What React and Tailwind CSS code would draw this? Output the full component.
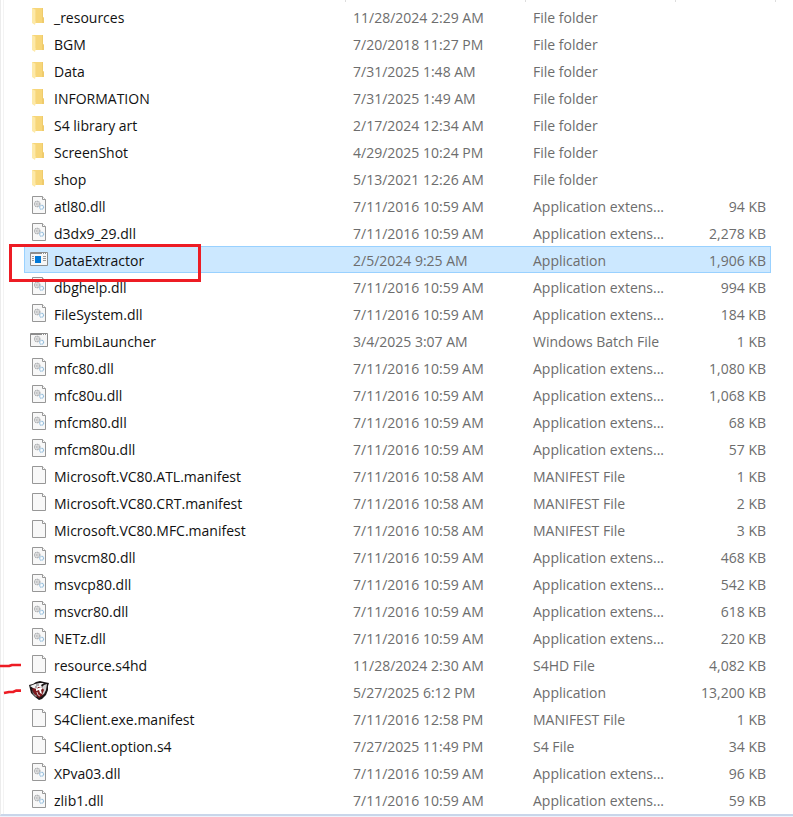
import clsx from 'clsx';

const files = [
  { name: '_resources', date: '11/28/2024 2:29 AM', type: 'File folder', size: '', icon: 'folder' },
  { name: 'BGM', date: '7/20/2018 11:27 PM', type: 'File folder', size: '', icon: 'folder' },
  { name: 'Data', date: '7/31/2025 1:48 AM', type: 'File folder', size: '', icon: 'folder' },
  { name: 'INFORMATION', date: '7/31/2025 1:49 AM', type: 'File folder', size: '', icon: 'folder' },
  { name: 'S4 library art', date: '2/17/2024 12:34 AM', type: 'File folder', size: '', icon: 'folder' },
  { name: 'ScreenShot', date: '4/29/2025 10:24 PM', type: 'File folder', size: '', icon: 'folder' },
  { name: 'shop', date: '5/13/2021 12:26 AM', type: 'File folder', size: '', icon: 'folder' },
  { name: 'atl80.dll', date: '7/11/2016 10:59 AM', type: 'Application extens...', size: '94 KB', icon: 'dll' },
  { name: 'd3dx9_29.dll', date: '7/11/2016 10:59 AM', type: 'Application extens...', size: '2,278 KB', icon: 'dll' },
  { name: 'DataExtractor', date: '2/5/2024 9:25 AM', type: 'Application', size: '1,906 KB', icon: 'app', selected: true, mark: 'box' },
  { name: 'dbghelp.dll', date: '7/11/2016 10:59 AM', type: 'Application extens...', size: '994 KB', icon: 'dll' },
  { name: 'FileSystem.dll', date: '7/11/2016 10:59 AM', type: 'Application extens...', size: '184 KB', icon: 'dll' },
  { name: 'FumbiLauncher', date: '3/4/2025 3:07 AM', type: 'Windows Batch File', size: '1 KB', icon: 'batch' },
  { name: 'mfc80.dll', date: '7/11/2016 10:59 AM', type: 'Application extens...', size: '1,080 KB', icon: 'dll' },
  { name: 'mfc80u.dll', date: '7/11/2016 10:59 AM', type: 'Application extens...', size: '1,068 KB', icon: 'dll' },
  { name: 'mfcm80.dll', date: '7/11/2016 10:59 AM', type: 'Application extens...', size: '68 KB', icon: 'dll' },
  { name: 'mfcm80u.dll', date: '7/11/2016 10:59 AM', type: 'Application extens...', size: '57 KB', icon: 'dll' },
  { name: 'Microsoft.VC80.ATL.manifest', date: '7/11/2016 10:58 AM', type: 'MANIFEST File', size: '1 KB', icon: 'file' },
  { name: 'Microsoft.VC80.CRT.manifest', date: '7/11/2016 10:58 AM', type: 'MANIFEST File', size: '2 KB', icon: 'file' },
  { name: 'Microsoft.VC80.MFC.manifest', date: '7/11/2016 10:58 AM', type: 'MANIFEST File', size: '3 KB', icon: 'file' },
  { name: 'msvcm80.dll', date: '7/11/2016 10:59 AM', type: 'Application extens...', size: '468 KB', icon: 'dll' },
  { name: 'msvcp80.dll', date: '7/11/2016 10:59 AM', type: 'Application extens...', size: '542 KB', icon: 'dll' },
  { name: 'msvcr80.dll', date: '7/11/2016 10:59 AM', type: 'Application extens...', size: '618 KB', icon: 'dll' },
  { name: 'NETz.dll', date: '7/11/2016 10:59 AM', type: 'Application extens...', size: '220 KB', icon: 'dll' },
  { name: 'resource.s4hd', date: '11/28/2024 2:30 AM', type: 'S4HD File', size: '4,082 KB', icon: 'file', mark: 'dash' },
  { name: 'S4Client', date: '5/27/2025 6:12 PM', type: 'Application', size: '13,200 KB', icon: 's4', mark: 'slant' },
  { name: 'S4Client.exe.manifest', date: '7/11/2016 12:58 PM', type: 'MANIFEST File', size: '1 KB', icon: 'file' },
  { name: 'S4Client.option.s4', date: '7/27/2025 11:49 PM', type: 'S4 File', size: '34 KB', icon: 'file' },
  { name: 'XPva03.dll', date: '7/11/2016 10:59 AM', type: 'Application extens...', size: '96 KB', icon: 'dll' },
  { name: 'zlib1.dll', date: '7/11/2016 10:59 AM', type: 'Application extens...', size: '59 KB', icon: 'dll' },
];

function Gears() {
  return (
    <>
      <circle cx="8.2" cy="9" r="2.7" fill="#ececec" stroke="#a0a3a6" strokeWidth="1.1" strokeDasharray="1.2 0.5" />
      <circle cx="8.2" cy="9" r="1" fill="#fff" stroke="#a0a3a6" strokeWidth="0.7" />
      <circle cx="12.6" cy="12.2" r="2" fill="#eef6fc" stroke="#93bbd9" strokeWidth="1.1" strokeDasharray="1.1 0.4" />
      <circle cx="12.6" cy="12.2" r="0.7" fill="#fff" />
    </>
  );
}

function Page() {
  return (
    <>
      <path d="M3.5 1.5h10l3 3v14h-13z" fill="#f8f8f8" stroke="#979797" />
      <path d="M13.5 1.5v3h3" fill="#fff" stroke="#979797" />
    </>
  );
}

function WindowFrame() {
  return (
    <>
      <path d="M1.5 3.5h17v13h-17z" fill="#f6f6f6" stroke="#8d8d8d" />
      <path d="M1 4.5h18" stroke="#8d8d8d" />
      <path d="M13 4.5h1M15 4.5h1M17 4.5h1" stroke="#fff" />
    </>
  );
}

function FileIcon({ kind }) {
  return (
    <svg viewBox="0 0 20 21" className="block w-5 h-[21px] shrink-0" aria-hidden="true">
      {kind === 'folder' && (
        <>
          <path d="M3 2h11v9l1 1v5H3z" fill="#f7d679" />
          <path d="M13 2h1v9l1 1v5h-2z" fill="#efcb6c" />
          <path d="M3 2l4 2v11l-1 4-3-2z" fill="#fde9a8" />
          <path d="M6 4h1v11l-1 1z" fill="#f9dd8c" />
        </>
      )}
      {kind === 'file' && <Page />}
      {kind === 'dll' && (
        <>
          <Page />
          <Gears />
        </>
      )}
      {kind === 'batch' && (
        <>
          <WindowFrame />
          <Gears />
        </>
      )}
      {kind === 'app' && (
        <>
          <WindowFrame />
          <path d="M3 7.5h2M3 9.5h2M3 11.5h2M14 7.5h3M14 9.5h3M14 11.5h3" stroke="#9a9a9a" />
          <path d="M6 7h6v7H6z" fill="#0078d7" />
        </>
      )}
      {kind === 's4' && (
        <>
          <path d="M0 4l4-1 3-2 4-1 4 1 5 1-1 3 0 4-2 5-4 4-3 1-4-3-4-4-1-4z" fill="#1a1516" />
          <path d="M3 8l2 5 5 4 4-3 2-6-4-2-6 0z" fill="#7d1a1e" />
          <path d="M1 5l5-2 5-1 4 0-3 2 1 2-4 0-1 2-4-1z" fill="#f2f2f2" />
          <path d="M15 4l3-1-1 6-2 4-2 1 2-5-2-3z" fill="#cfcfcf" />
          <path d="M7 8l5-2 2 1-2 2 1 4-2-1-1-3-3 1z" fill="#fff" />
          <path d="M3 9l2 4 3 2-1 1-3-3z" fill="#9b9b9b" />
          <path d="M8 11l1 3 2 1" fill="none" stroke="#e9e9e9" strokeWidth="0.8" />
          <path d="M7 4h3M6 6h2" stroke="#4a4244" strokeWidth="0.8" />
        </>
      )}
    </svg>
  );
}

// red pen marks drawn over the list
function Mark({ kind }) {
  if (kind === 'box') {
    return (
      <span className="absolute z-10 -left-4 -top-[3px] w-48 h-[38px] border-3 border-[#ed1c24] pointer-events-none" />
    );
  }
  return (
    <svg
      viewBox="0 0 24 27"
      className="absolute z-10 -left-6 top-0 w-6 h-[27px] pointer-events-none"
      fill="none"
      stroke="#ed1c24"
      strokeWidth="2.6"
      strokeLinejoin="round"
      aria-hidden="true"
    >
      {kind === 'dash' ? <path d="M0 14h9l3-1h9" /> : <path d="M4 14l5-1h4l3-1.4h5" />}
    </svg>
  );
}

function FileRow({ file }) {
  const cell = clsx(
    'h-[27px] font-normal whitespace-nowrap border-y',
    file.selected ? 'bg-[#cce8ff] border-[#99d1ff]' : 'border-transparent'
  );

  return (
    <tr aria-selected={!!file.selected}>
      <th scope="row" className={clsx(cell, 'relative text-left text-[#111111]', file.selected && 'border-l')}>
        <div className={clsx('flex items-center gap-[5px]', file.selected ? 'pl-1' : 'pl-[5px]')}>
          <FileIcon kind={file.icon} />
          <span className="pt-0.5">{file.name}</span>
        </div>
        {file.mark && <Mark kind={file.mark} />}
      </th>
      <td className={clsx(cell, 'pt-0.5 pl-2')}>{file.date}</td>
      <td className={clsx(cell, 'pt-0.5 pl-2')}>{file.type}</td>
      <td className={clsx(cell, 'pt-0.5 text-right', file.selected ? 'border-r pr-1' : 'pr-[5px]')}>{file.size}</td>
    </tr>
  );
}

function App() {
  return (
    <main className="min-h-screen bg-[#eef3fb] font-['Open_Sans','Noto_Sans',sans-serif] text-sm leading-5 text-[#6d6d6d]">
      <div className="bg-white border-l border-l-[#ececec] border-b-2 border-b-[#c9d6ea]">
        <div className="ml-[2px] border-l border-[#f3f3f3] pl-5 pr-[17px] pb-px">
          <div className="flex h-[3px] items-start" aria-hidden="true">
            <div className="flex-1" />
            <div className="w-[180px] h-0.5 border-l border-[#dddddd]" />
            <div className="w-[150px] h-0.5 border-l border-[#dddddd]" />
            <div className="w-[101px] h-0.5 border-x border-[#dddddd]" />
          </div>
          <div className="pr-[5px]">
            <table className="w-full table-fixed border-separate border-spacing-0">
              <colgroup>
                <col />
                <col className="w-[180px]" />
                <col className="w-[150px]" />
                <col className="w-24" />
              </colgroup>
              <tbody>
                {files.map((file) => (
                  <FileRow key={file.name} file={file} />
                ))}
              </tbody>
            </table>
          </div>
        </div>
      </div>
    </main>
  );
}

export default App;
